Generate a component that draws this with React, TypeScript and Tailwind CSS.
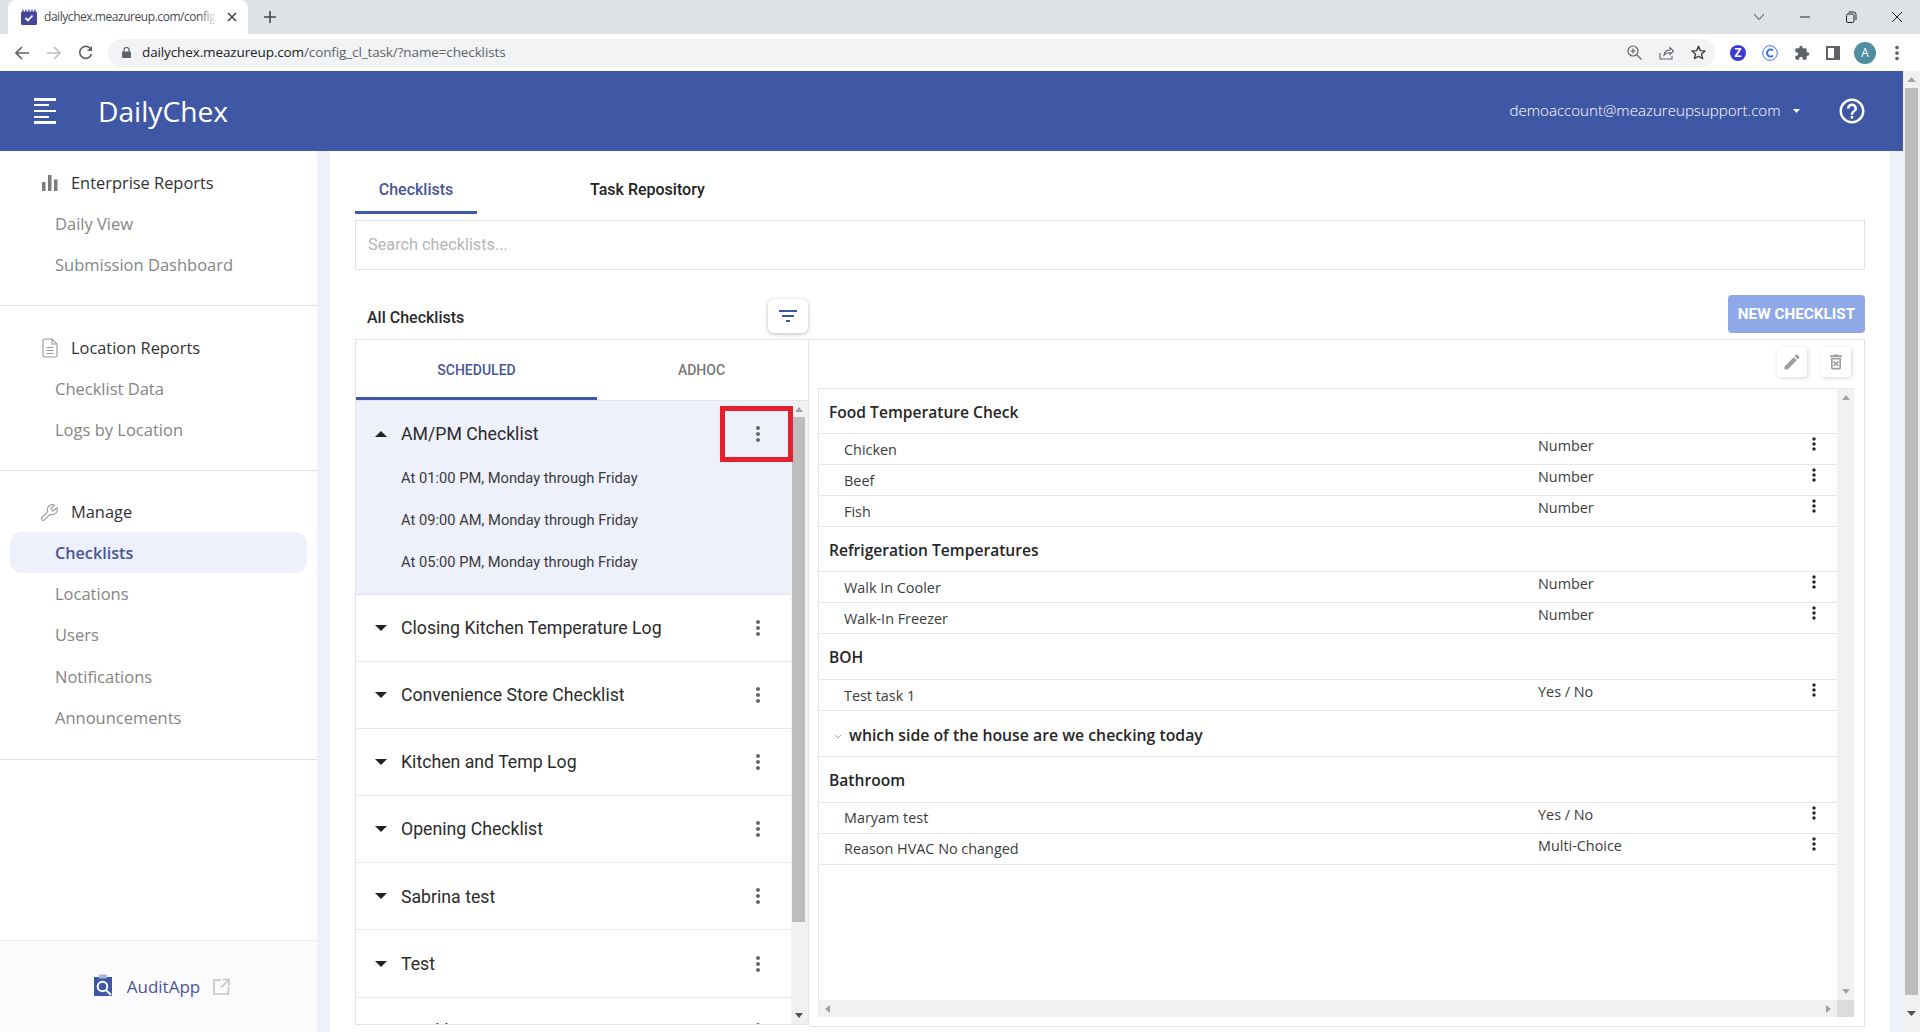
import React from "react";

const P = {
  kebab: "M12 8c1.1 0 2-.9 2-2s-.9-2-2-2-2 .9-2 2 .9 2 2 2zm0 2c-1.1 0-2 .9-2 2s.9 2 2 2 2-.9 2-2-.9-2-2-2zm0 6c-1.1 0-2 .9-2 2s.9 2 2 2 2-.9 2-2-.9-2-2-2z",
  filter: "M10 18h4v-2h-4v2zM3 6v2h18V6H3zm3 7h12v-2H6v2z",
  edit: "M3 17.25V21h3.75L17.81 9.94l-3.75-3.75L3 17.25zM20.71 7.04c.39-.39.39-1.02 0-1.41l-2.34-2.34c-.39-.39-1.02-.39-1.41 0l-1.83 1.83 3.75 3.75 1.83-1.83z",
  help: "M11 18h2v-2h-2v2zm1-16C6.48 2 2 6.48 2 12s4.48 10 10 10 10-4.48 10-10S17.52 2 12 2zm0 18c-4.41 0-8-3.59-8-8s3.59-8 8-8 8 3.59 8 8-3.59 8-8 8zm0-14c-2.21 0-4 1.79-4 4h2c0-1.1.9-2 2-2s2 .9 2 2c0 2-3 1.75-3 5h2c0-2.25 3-2.5 3-5 0-2.21-1.79-4-4-4z",
  del: "M14.12 10.47L12 12.59l-2.13-2.12-1.41 1.41L10.59 14l-2.12 2.12 1.41 1.41L12 15.41l2.12 2.12 1.41-1.41L13.41 14l2.12-2.12zM15.5 4l-1-1h-5l-1 1H5v2h14V4zM6 19c0 1.1.9 2 2 2h8c1.1 0 2-.9 2-2V7H6v12zM8 9h8v10H8V9z",
  puzzle: "M20.5 11H19V7c0-1.1-.9-2-2-2h-4V3.5C13 2.12 11.88 1 10.5 1S8 2.12 8 3.5V5H4c-1.1 0-1.99.9-1.99 2v3.8H3.5c1.49 0 2.7 1.21 2.7 2.7s-1.21 2.7-2.7 2.7H2V20c0 1.1.9 2 2 2h3.8v-1.5c0-1.49 1.21-2.7 2.7-2.7 1.49 0 2.7 1.21 2.7 2.7V22H17c1.1 0 2-.9 2-2v-4h1.5c1.38 0 2.5-1.12 2.5-2.5S21.88 11 20.5 11z",
};

function Icon({ d, size = 24, className = "" }: { d: string; size?: number; className?: string }) {
  return (
    <svg width={size} height={size} viewBox="0 0 24 24" fill="currentColor" className={"shrink-0 " + className}>
      <path d={d} />
    </svg>
  );
}

function Tri({ dir, className = "", w = 12, h = 7 }: { dir: "up" | "down" | "left" | "right"; className?: string; w?: number; h?: number }) {
  const pts = { up: "0,10 10,10 5,0", down: "0,0 10,0 5,10", left: "10,0 10,10 0,5", right: "0,0 0,10 10,5" }[dir];
  return (
    <svg width={w} height={h} viewBox="0 0 10 10" preserveAspectRatio="none" fill="currentColor" className={"shrink-0 " + className}>
      <polygon points={pts} />
    </svg>
  );
}

function ChromeTop() {
  return (
    <div className="h-[34px] bg-[#dee1e6] flex items-stretch shrink-0 pl-[8px] font-['Open_Sans',sans-serif]">
      <div className="w-[240px] bg-white rounded-t-[8px] flex items-center pl-[13px] pr-[9px]">
        <svg width="16" height="16" viewBox="0 0 16 16" className="shrink-0">
          <rect x="0" y="2.500" width="16" height="13.500" rx="1.500" fill="#46479b" />
          <path d="M2 0.500v3M5 0.500v3M8 0.500v3M11 0.500v3M14 0.500v3" stroke="#46479b" strokeWidth="1.200" />
          <path d="M4.500 9l2.500 2.500 4.500-5" stroke="#fff" strokeWidth="1.800" fill="none" />
        </svg>
        <div className="relative ml-[7px] w-[173px] overflow-hidden whitespace-nowrap text-[12px] tracking-[-0.45px] text-[#45494e]">
          dailychex.meazureup.com/config_cl
          <div className="absolute right-0 top-0 h-full w-[18px] bg-gradient-to-r from-transparent to-white" />
        </div>
        <svg width="10" height="10" viewBox="0 0 10 10" className="ml-[10px] shrink-0" stroke="#44474b" strokeWidth="1.600">
          <path d="M1 1l8 8M9 1l-8 8" />
        </svg>
      </div>
      <div className="ml-[16px] flex items-center">
        <svg width="12" height="12" viewBox="0 0 12 12" stroke="#44474b" strokeWidth="1.600">
          <path d="M6 0v12M0 6h12" />
        </svg>
      </div>
      <div className="ml-auto flex items-center pr-[17px] gap-[34px]">
        <svg width="12" height="8" viewBox="0 0 12 8" fill="none" stroke="#3c4043"><path d="M1 1l5 5.500L11 1" /></svg>
        <svg width="12" height="2" viewBox="0 0 12 2" stroke="#222"><path d="M1 1h10" /></svg>
        <svg width="12" height="12" viewBox="0 0 12 12" fill="none" stroke="#222"><rect x="1.500" y="3" width="7.500" height="8.500" rx="1.500" /><path d="M3.500 1h5a2.500 2.500 0 0 1 2.500 2.500V9" /></svg>
        <svg width="12" height="12" viewBox="0 0 12 12" stroke="#222"><path d="M1 1l10 10M11 1L1 11" /></svg>
      </div>
    </div>
  );
}

function ChromeBar() {
  return (
    <div className="h-[37px] bg-white flex items-center shrink-0 pl-[15px] font-['Open_Sans',sans-serif]">
      <svg width="14" height="14" viewBox="0 0 14 14" fill="none" stroke="#5f6368" strokeWidth="1.700"><path d="M14 7H1.500M7 1L1 7l6 6" /></svg>
      <svg width="14" height="14" viewBox="0 0 14 14" fill="none" stroke="#bdc1c6" strokeWidth="1.700" className="ml-[18px]"><path d="M0 7h12.500M7 1l6 6-6 6" /></svg>
      <svg width="15" height="15" viewBox="0 0 15 15" fill="none" stroke="#5f6368" strokeWidth="1.700" className="ml-[17px]"><path d="M13 4.500A6 6 0 1 0 13.500 9" /><path d="M14 1v5H9z" fill="#5f6368" stroke="none" /></svg>
      <div className="ml-[15px] w-[1607px] h-[28px] bg-[#f1f3f4] rounded-full flex items-center pl-[14px] pr-[7px]">
        <svg width="9" height="11" viewBox="0 0 9 11" className="shrink-0"><path d="M2 5V3a2.500 2.500 0 0 1 5 0v2" fill="none" stroke="#5f6368" strokeWidth="1.200" /><rect y="4.500" width="9" height="6.500" rx="1" fill="#5f6368" /></svg>
        <div className="ml-[11px] text-[13.500px] tracking-[-0.12px] whitespace-nowrap text-[#5f6368]"><span className="text-[#202124]">dailychex.meazureup.com</span>/config_cl_task/?name=checklists</div>
        <div className="ml-auto flex items-center gap-[17px]">
          <svg width="15" height="15" viewBox="0 0 15 15" fill="none" stroke="#5f6368" strokeWidth="1.200"><circle cx="6" cy="6" r="5" /><path d="M10 10l4.500 4.500M6 3.500v5M3.500 6h5" /></svg>
          <svg width="15" height="15" viewBox="0 0 15 15" fill="none" stroke="#5f6368" strokeWidth="1.100"><path d="M1 8v6h12v-3M5 10c.5-3 3-5 6-5V2.500L14.500 6 11 9.500V7.500c-2.500 0-4.500 1-6 2.500z" /></svg>
          <svg width="15" height="15" viewBox="0 0 24 24" fill="none" stroke="#3c4043" strokeWidth="2.200" strokeLinejoin="round" className="mr-[2px]"><path d="M12 2l3 7 7.500.6-5.700 4.900 1.800 7.300L12 18l-6.600 3.800 1.800-7.300L1.500 9.600 9 9z" /></svg>
        </div>
      </div>
      <div className="ml-[15px] flex items-center">
        <div className="w-[16px] h-[16px] rounded-full bg-[#3b3bd6] text-white text-[12px] font-bold flex items-center justify-center leading-none">Z</div>
        <svg width="16" height="16" viewBox="0 0 16 16" fill="none" stroke="#3f6df0" className="ml-[16px]"><circle cx="8" cy="8" r="7.300" strokeWidth="1" /><path d="M11 5.500a3.500 3.500 0 1 0 0 5" strokeWidth="2" /></svg>
        <Icon d={P.puzzle} size={16} className="ml-[16px] text-[#5f6368]" />
        <div className="ml-[16px] w-[14px] h-[14px] border-[2px] border-[#5f6368] flex justify-end"><div className="w-[4px] h-full bg-[#5f6368]" /></div>
        <div className="ml-[14px] w-[22px] h-[22px] rounded-full bg-[#4f8e9e] text-white text-[12px] flex items-center justify-center">A</div>
        <Icon d={P.kebab} size={22} className="ml-[10px] text-[#5f6368]" />
      </div>
    </div>
  );
}

function PageScroll() {
  return (
    <div className="w-[17px] bg-[#f1f1f1] flex flex-col shrink-0">
      <div className="h-[17px] flex items-center justify-center"><Tri dir="up" w={9} h={5} className="text-[#a3a3a3]" /></div>
      <div className="h-[907px] ml-[2px] mr-[2px] bg-[#bdbdbd]" />
      <div className="flex-1 flex items-center justify-center"><Tri dir="down" w={9} h={5} className="text-[#505050]" /></div>
    </div>
  );
}

function Header() {
  return (
    <div className="h-[80px] bg-[#3f58a6] flex items-center text-white shrink-0 font-['Open_Sans',sans-serif]">
      <div className="ml-[34px] w-[22px] flex flex-col gap-[3.400px]">
        <div className="h-[2.400px] w-[22px] bg-white" />
        <div className="h-[2.400px] w-[15px] bg-white" />
        <div className="h-[2.400px] w-[22px] bg-white" />
        <div className="h-[2.400px] w-[15px] bg-white" />
        <div className="h-[2.400px] w-[22px] bg-white" />
      </div>
      <div className="ml-[42px] text-[28.200px] leading-none">DailyChex</div>
      <div className="ml-auto text-[15.100px] font-light -mt-[2px]">demoaccount@meazureupsupport.com</div>
      <Tri dir="down" w={7} h={4} className="ml-[12px]" />
      <Icon d={P.help} size={30} className="ml-[37.500px] mr-[36px] -mt-[1px]" />
    </div>
  );
}

function SideHead({ icon, label, h = "h-[41px]" }: { icon: React.ReactNode; label: string; h?: string }) {
  return (
    <div className={h + " flex items-center pt-[1px] text-[#333] text-[16.400px]"}>
      <div className="w-[71px] flex justify-end pr-[13px] shrink-0">{icon}</div>
      {label}
    </div>
  );
}

function SideItem({ label, h = "h-[41px]" }: { label: string; h?: string }) {
  return <div className={h + " flex items-center pl-[55px] pt-[1px] text-[16.500px] text-[#858585]"}>{label}</div>;
}

function Sidebar() {
  return (
    <div className="w-[317px] bg-white flex flex-col shrink-0 font-['Open_Sans',sans-serif]">
      <div className="pt-[11px] pb-[20px] border-b border-[#e0e0e0]">
        <SideHead
          label="Enterprise Reports"
          icon={
            <svg width="16" height="16" viewBox="0 0 16 16" fill="#7c7c7c">
              <rect x="0" y="7" width="3.500" height="9" />
              <rect x="6" y="0" width="3.500" height="16" />
              <rect x="12" y="4.500" width="3.500" height="11.500" />
            </svg>
          }
        />
        <SideItem label="Daily View" />
        <SideItem label="Submission Dashboard" />
      </div>
      <div className="pt-[21px] pb-[20px] border-b border-[#e0e0e0]">
        <SideHead
          label="Location Reports"
          icon={
            <svg width="16" height="20" viewBox="0 0 16 20" fill="none" stroke="#9a9a9a" strokeWidth="1.100">
              <path d="M1 2.500A1.500 1.500 0 0 1 2.500 1H10l5 5v11.500a1.500 1.500 0 0 1-1.500 1.500h-11A1.500 1.500 0 0 1 1 17.500z" />
              <path d="M10 1v5h5M4.500 9.500h7M4.500 12.500h7M4.500 15.500h7" />
            </svg>
          }
        />
        <SideItem label="Checklist Data" />
        <SideItem label="Logs by Location" />
      </div>
      <div className="pt-[21px] pb-[20px] border-b border-[#e0e0e0]">
        <SideHead
          label="Manage"
          h="h-[40px]"
          icon={
            <svg width="20" height="20" viewBox="0 0 24 24" fill="none" stroke="#9a9a9a" strokeWidth="1.300" strokeLinejoin="round" className="-mr-[1px]">
              <path d="M14.700 6.300a1 1 0 0 0 0 1.400l1.600 1.600a1 1 0 0 0 1.400 0l3.770-3.770a6 6 0 0 1-7.940 7.940l-6.910 6.910a2.120 2.120 0 0 1-3-3l6.910-6.910a6 6 0 0 1 7.940-7.940l-3.760 3.760z" />
            </svg>
          }
        />
        <div className="mx-[10px] h-[41px] rounded-[12px] bg-[#eef0fb] flex items-center pl-[45px] pt-[1px] text-[16.200px] font-semibold text-[#4a5596]">Checklists</div>
        <SideItem label="Locations" h="h-[41.500px]" />
        <SideItem label="Users" h="h-[41.500px]" />
        <SideItem label="Notifications" h="h-[41.500px]" />
        <SideItem label="Announcements" h="h-[41.500px]" />
      </div>
      <div className="mt-auto h-[92px] border-t border-[#efefef] bg-[#fbfbfd] flex items-center justify-center pl-[7px]">
        <svg width="18" height="24" viewBox="0 0 18 24" className="shrink-0 -mt-[1px]">
          <rect x="0" y="3" width="18" height="19" fill="#3f58a6" />
          <rect x="5" y="0.500" width="8" height="4" rx="1" fill="#a8b4d6" />
          <circle cx="8.500" cy="12.500" r="4.800" fill="none" stroke="#fff" strokeWidth="2" />
          <path d="M12 16l5 5" stroke="#fff" strokeWidth="2" />
        </svg>
        <span className="ml-[15px] text-[17px] text-[#4a5596]">AuditApp</span>
        <svg width="17" height="17" viewBox="0 0 17 17" fill="none" stroke="#c4c4c4" strokeWidth="1.600" className="ml-[13px]">
          <path d="M15.500 9v7H1V2h7M8 9.500L15 2.500M10 1.500h6v6" />
        </svg>
      </div>
    </div>
  );
}

const lists = ["Closing Kitchen Temperature Log", "Convenience Store Checklist", "Kitchen and Temp Log", "Opening Checklist", "Sabrina test", "Test", "Weekly"];

function ListRow({ title, open }: { title: string; open?: boolean }) {
  return (
    <div className="h-[46px] flex items-center pl-[19px] pr-[21px] shrink-0">
      <Tri dir={open ? "up" : "down"} w={12} h={6} className="text-[#222]" />
      <div className="ml-[14px] pt-[1px] text-[17.700px] text-[#2b2b2b] whitespace-nowrap">{title}</div>
      <Icon d={P.kebab} size={24} className="ml-auto text-[#666]" />
    </div>
  );
}

function LeftPanel() {
  return (
    <div className="w-[454px] h-[686px] border-l border-t border-b border-r border-[#e4e4e4] flex flex-col shrink-0">
      <div className="h-[61px] flex border-b border-[#e4e4e4] shrink-0 text-[14px] font-medium">
        <div className="w-[241px] h-[60px] border-b-[3px] border-[#3f58a6] flex items-center justify-center pt-[3px] text-[#4a5596]">SCHEDULED</div>
        <div className="flex-1 flex items-center justify-center pr-[2px] pt-[1px] text-[#777]">ADHOC</div>
      </div>
      <div className="relative flex-1 flex min-h-0">
        <div className="flex-1 min-w-0 overflow-hidden">
          <div className="bg-[#eef0fb] h-[193.500px] pt-[10px] border-b border-[#e4e4e4]">
            <ListRow title="AM/PM Checklist" open />
            {["At 01:00 PM, Monday through Friday", "At 09:00 AM, Monday through Friday", "At 05:00 PM, Monday through Friday"].map((t) => (
              <div key={t} className="h-[42px] pl-[45px] flex items-center text-[14.700px] text-[#3a3a3a] whitespace-nowrap">{t}</div>
            ))}
          </div>
          {lists.map((t) => (
            <div key={t} className="h-[67.200px] flex items-center border-b border-[#e8e8e8]">
              <div className="flex-1 min-w-0"><ListRow title={t} /></div>
            </div>
          ))}
        </div>
        <div className="w-[17px] bg-[#f1f1f1] flex flex-col shrink-0">
          <div className="h-[16px] flex items-center justify-center pr-[2px]"><Tri dir="up" w={8} h={5} className="text-[#a3a3a3]" /></div>
          <div className="h-[505px] ml-[1px] mr-[3px] bg-[#bdbdbd]" />
          <div className="flex-1 flex items-end justify-center pb-[6px] pr-[2px]"><Tri dir="down" w={8} h={5} className="text-[#505050]" /></div>
        </div>
        <div className="absolute left-[364px] top-[5px] w-[73px] h-[56px] border-[5px] border-[#e61f2d]" />
      </div>
    </div>
  );
}

type Row = { k: "h"; t: string; h: number; pt?: string } | { k: "q"; t: string } | { k: "t"; t: string; v: string; pt?: string };
const rows: Row[] = [
  { k: "h", t: "Food Temperature Check", h: 45 },
  { k: "t", t: "Chicken", v: "Number" },
  { k: "t", t: "Beef", v: "Number" },
  { k: "t", t: "Fish", v: "Number" },
  { k: "h", t: "Refrigeration Temperatures", h: 45 },
  { k: "t", t: "Walk In Cooler", v: "Number" },
  { k: "t", t: "Walk-In Freezer", v: "Number" },
  { k: "h", t: "BOH", h: 46, pt: "pt-[3px]" },
  { k: "t", t: "Test task 1", v: "Yes / No" },
  { k: "q", t: "which side of the house are we checking today" },
  { k: "h", t: "Bathroom", h: 46, pt: "pt-[3px]" },
  { k: "t", t: "Maryam test", v: "Yes / No", pt: "pb-[1px]" },
  { k: "t", t: "Reason HVAC No changed", v: "Multi-Choice", pt: "pb-[1px]" },
];

function TaskTable() {
  return (
    <div className="ml-[9px] mr-[10px] h-[629px] border-t border-l border-[#e6e6e6] flex flex-col font-['Open_Sans',sans-serif]">
      <div className="flex-1 flex min-h-0">
        <div className="flex-1 min-w-0">
          {rows.map((r) => {
            if (r.k === "h")
              return (
                <div key={r.t} style={{ height: r.h }} className={"flex items-center pl-[10px] border-b border-[#e6e6e6] text-[15.600px] font-semibold text-[#262626] " + (r.pt ?? "pt-[3px]")}>
                  {r.t}
                </div>
              );
            if (r.k === "q")
              return (
                <div key={r.t} className="h-[46px] flex items-center pl-[15px] pt-[5px] border-b border-[#e6e6e6] text-[15.800px] font-semibold text-[#262626]">
                  <svg width="8" height="5" viewBox="0 0 8 5" fill="none" stroke="#9aa5d6" className="shrink-0 mr-[7px]"><path d="M1 1l3 3 3-3" /></svg>
                  {r.t}
                </div>
              );
            return (
              <div key={r.t} className="h-[31px] flex items-center border-b border-[#e6e6e6] text-[14.400px] text-[#3c3c3c]">
                <div className={"w-[719px] pl-[25px] whitespace-nowrap " + (r.pt ?? "pt-[1px]")}>{r.t}</div>
                <div className="w-[267px] pb-[7px]">{r.v}</div>
                <div className="pb-[11px] -ml-[1px]"><Icon d={P.kebab} size={20} className="text-[#262626]" /></div>
              </div>
            );
          })}
        </div>
        <div className="w-[17px] bg-[#f1f1f1] flex flex-col justify-between items-center shrink-0 py-[6px]">
          <Tri dir="up" w={8} h={5} className="text-[#a3a3a3]" />
          <Tri dir="down" w={8} h={5} className="text-[#a3a3a3]" />
        </div>
      </div>
      <div className="h-[17px] flex shrink-0">
        <div className="flex-1 bg-[#f1f1f1] flex items-center justify-between px-[6px]">
          <Tri dir="left" w={5} h={8} className="text-[#a3a3a3]" />
          <Tri dir="right" w={5} h={8} className="text-[#a3a3a3]" />
        </div>
        <div className="w-[17px] bg-[#dcdcdc]" />
      </div>
    </div>
  );
}

function RightPanel() {
  return (
    <div className="flex-1 min-w-0 h-[688px] border-t border-r border-b border-[#e4e4e4] flex flex-col">
      <div className="h-[48px] flex justify-end items-start pt-[7px] pr-[13px] gap-[14px] shrink-0">
        <div className="w-[30px] h-[30px] rounded-[3px] bg-white shadow-[1px_1px_4px_rgba(0,0,0,0.16)] flex items-center justify-center"><Icon d={P.edit} size={20} className="text-[#9e9e9e]" /></div>
        <div className="w-[30px] h-[30px] rounded-[3px] bg-white shadow-[1px_1px_4px_rgba(0,0,0,0.16)] flex items-center justify-center"><Icon d={P.del} size={20} className="text-[#9e9e9e]" /></div>
      </div>
      <TaskTable />
    </div>
  );
}

function Main() {
  return (
    <div className="flex-1 min-w-0 bg-white pl-[25px] pr-[25px] flex flex-col">
      <div className="h-[63px] flex items-stretch shrink-0 text-[16px] font-medium">
        <div className="w-[122px] border-b-[3px] border-[#3f58a6] flex items-center justify-center pt-[17px] text-[#4a5596]">Checklists</div>
        <div className="ml-[113px] flex items-center pt-[15px] text-[#222]">Task Repository</div>
      </div>
      <div className="mt-[6px] h-[50px] border border-[#e0e0e0] flex items-center pl-[12px] shrink-0 text-[16.300px] text-[#b5b5b5]">Search checklists...</div>
      <div className="h-[69px] flex items-end shrink-0">
        <div className="w-[453px] flex items-center pl-[12px] pb-[6px]">
          <div className="text-[16px] font-medium text-[#2b2b2b] pt-[3px]">All Checklists</div>
          <div className="ml-auto w-[40px] h-[34px] rounded-[6px] bg-white shadow-[0_1px_4px_rgba(0,0,0,0.28)] flex items-center justify-center"><Icon d={P.filter} size={24} className="text-[#3f58a6]" /></div>
        </div>
        <div className="ml-auto w-[137px] h-[38px] mb-[6px] rounded-[4px] bg-[#8fa8e8] text-white font-bold text-[15.300px] flex items-center justify-center">NEW CHECKLIST</div>
      </div>
      <div className="flex items-start">
        <LeftPanel />
        <RightPanel />
      </div>
    </div>
  );
}

export default function App() {
  return (
    <div className="w-[1920px] h-[1032px] overflow-hidden flex flex-col font-['Roboto',sans-serif]">
      <ChromeTop />
      <ChromeBar />
      <div className="flex-1 flex min-h-0">
        <div className="flex-1 min-w-0 flex flex-col">
          <Header />
          <div className="flex-1 flex min-h-0 bg-[#eef1fb] pr-[13px] gap-[13px]">
            <Sidebar />
            <Main />
          </div>
        </div>
        <PageScroll />
      </div>
    </div>
  );
}
